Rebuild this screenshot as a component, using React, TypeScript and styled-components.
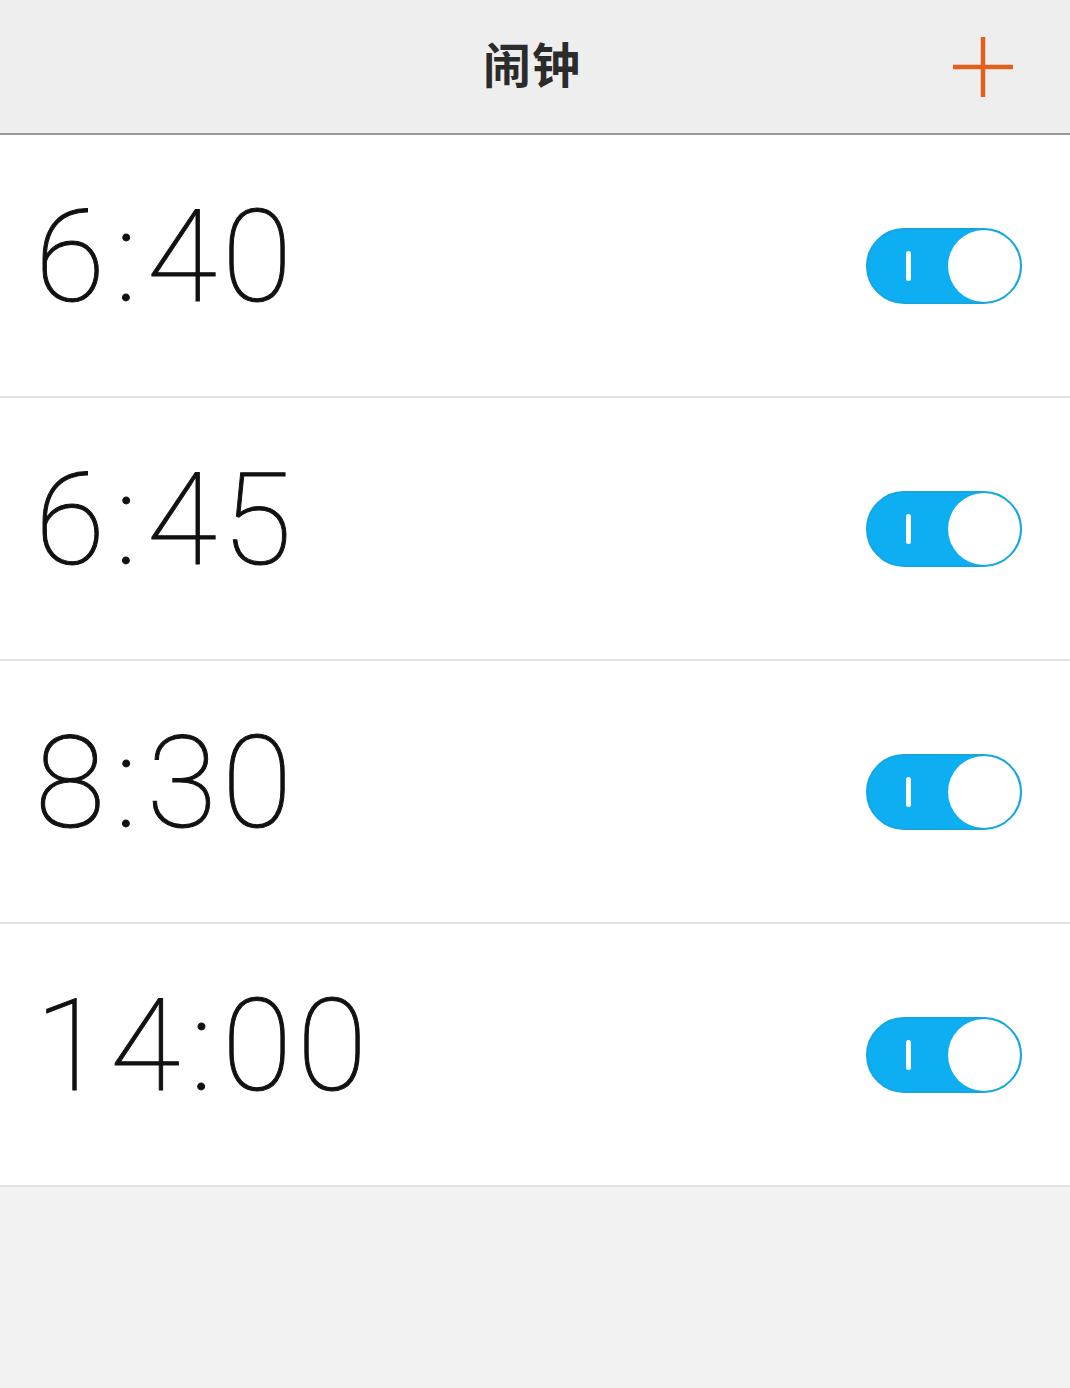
import React, { useState } from "react";
import styled, { createGlobalStyle } from "styled-components";

const Global = createGlobalStyle`
  html, body {
    margin: 0;
    padding: 0;
    background: #f2f2f2;
  }
  body {
    font-family: Roboto, "Noto Sans CJK SC", sans-serif;
  }
`;

const Page = styled.div`
  width: 1070px;
  min-height: 1388px;
  background: #f2f2f2;
`;

const Header = styled.header`
  height: 133px;
  background: #eeeeee;
  border-bottom: 2px solid #9a9a9a;
  display: flex;
  align-items: center;
  justify-content: center;
  position: relative;
`;

const Title = styled.h1`
  margin: 0 0 10px 0;
  font-family: "Noto Sans CJK SC", sans-serif;
  font-size: 48px;
  font-weight: 700;
  color: #2b2b2b;
  letter-spacing: 1px;
  transform: translateX(-3px);
`;

const AddButton = styled.button`
  position: absolute;
  right: 56px;
  top: 36px;
  width: 62px;
  height: 62px;
  padding: 0;
  border: none;
  background: transparent;
  cursor: pointer;
`;

const List = styled.ul`
  list-style: none;
  margin: 0;
  padding: 0;
`;

const Row = styled.li`
  height: 261px;
  background: #ffffff;
  border-bottom: 2px solid #e2e2e2;
  display: flex;
  align-items: center;
  justify-content: space-between;
  padding: 0 48px 0 35px;
`;

const Time = styled.span`
  font-family: Roboto, sans-serif;
  font-weight: 100;
  font-size: 128px;
  color: #111;
  line-height: 1;
  letter-spacing: 5px;
  -webkit-text-stroke: 1px #111;
  margin-top: -18px;
`;

const Colon = styled.span`
  margin: 0 4px 0 5px;
`;

const Switch = styled.button<{ $on: boolean }>`
  position: relative;
  width: 156px;
  height: 76px;
  padding: 0;
  border-radius: 38px;
  border: 2px solid ${(p) => (p.$on ? "#15a6e0" : "#d0d0d0")};
  background: ${(p) => (p.$on ? "#0eaef2" : "#e6e6e6")};
  cursor: pointer;
`;

const Mark = styled.span`
  position: absolute;
  left: 38px;
  top: 21px;
  width: 5px;
  height: 30px;
  border-radius: 3px;
  background: #ffffff;
`;

const Knob = styled.span<{ $on: boolean }>`
  position: absolute;
  top: 0;
  ${(p) => (p.$on ? "right: 0;" : "left: 0;")}
  width: 72px;
  height: 72px;
  border-radius: 50%;
  background: #ffffff;
`;

const alarms = ["6:40", "6:45", "8:30", "14:00"];

export default function App() {
  const [on, setOn] = useState<boolean[]>(alarms.map(() => true));
  return (
    <Page>
      <Global />
      <Header>
        <Title>闹钟</Title>
        <AddButton aria-label="添加闹钟">
          <svg width="62" height="62" viewBox="0 0 62 62">
            <path d="M31 1V61M1 31H61" stroke="#e2601c" strokeWidth="4.5" />
          </svg>
        </AddButton>
      </Header>
      <List>
        {alarms.map((t, i) => {
          const [h, m] = t.split(":");
          return (
            <Row key={t}>
              <Time>
                {h}
                <Colon>:</Colon>
                {m}
              </Time>
              <Switch
                $on={on[i]}
                onClick={() => setOn((s) => s.map((v, j) => (j === i ? !v : v)))}
              >
                {on[i] && <Mark />}
                <Knob $on={on[i]} />
              </Switch>
            </Row>
          );
        })}
      </List>
    </Page>
  );
}
